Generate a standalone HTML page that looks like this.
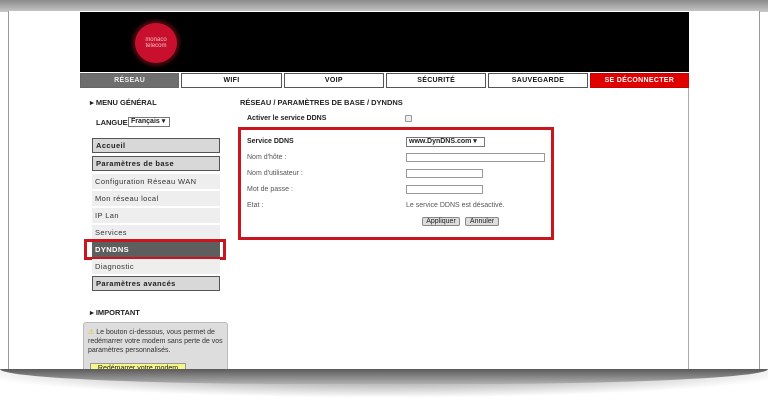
<!DOCTYPE html>
<html><head><meta charset="utf-8"><style>
*{margin:0;padding:0;box-sizing:border-box}
body{width:768px;height:417px;background:#fff;position:relative;overflow:hidden;font-family:"Liberation Sans",Verdana,sans-serif;font-size:8px;color:#222}
.topbar{position:absolute;left:0;top:0;width:768px;height:12px;background:linear-gradient(#8a8a8a,#c8c8c8)}
.page{position:absolute;left:8px;top:11px;width:752px;height:360px;background:#fff;border-left:1px solid #999;border-right:1px solid #999}
.hdr{position:absolute;left:80px;top:12px;width:609px;height:60px;background:#000}
.logo{position:absolute;left:55px;top:11px;width:42px;height:40px;border-radius:50%;background:#c8102e;box-shadow:0 0 3px 3px #4a0a10;color:#f0c0c0;font-size:6px;line-height:6px;text-align:center;padding-top:14px}
.nav{position:absolute;left:80px;top:73px;width:609px;height:15px;display:flex}
.nav div{height:15px;border:1px solid #555;font-weight:bold;font-size:7px;text-align:center;line-height:13px;margin-right:2px;background:#fff;color:#111;letter-spacing:.3px}
.vl{position:absolute;left:688px;top:88px;width:1px;height:283px;background:#aaa}
.m{position:absolute;left:92px;width:128px;height:15px;font-size:7.5px;line-height:15px;padding-left:3px;color:#333;background:#eee;letter-spacing:.4px}
.m.b{background:#d8d8d8;border:1px solid #555;font-weight:bold;line-height:13px;color:#222}
.t{position:absolute;font-size:7.5px}
.in{position:absolute;height:9px;border:1px solid #999;background:#fff}
.bottom{position:absolute;left:0;top:369px;width:768px;height:48px;background:radial-gradient(ellipse 55% 60% at 50% 0%,#777 0%,#aaa 40%,#fff 100%)}
.bar2{position:absolute;left:0;top:369px;width:768px;height:15px;background:linear-gradient(#5a5a5a,#b0b0b0);border-radius:0 0 40% 40%/0 0 100% 100%}
</style></head><body>
<div class="topbar"></div>
<div class="page"></div>
<div class="hdr"><div class="logo">monaco<br>telecom</div></div>
<div class="nav">
<div style="width:100px;background:#6e6e6e;color:#eee;border-color:#666">RÉSEAU</div>
<div style="width:101px">WIFI</div>
<div style="width:101px">VOIP</div>
<div style="width:101px">SÉCURITÉ</div>
<div style="width:100px">SAUVEGARDE</div>
<div style="width:100px;background:#e00000;color:#fff;border-color:#c00;margin:0">SE DÉCONNECTER</div>
</div>
<div class="vl"></div>
<div class="t" style="left:90px;top:98px;font-weight:bold">▸ MENU GÉNÉRAL</div>
<div class="t" style="left:96px;top:118px;font-weight:bold">LANGUE</div>
<div class="in" style="left:128px;top:117px;width:42px;height:10px;font-size:7px;font-weight:bold;line-height:8px;padding-left:2px;border-color:#777">Français ▾</div>
<div class="m b" style="top:138px">Accueil</div>
<div class="m b" style="top:156px">Paramètres de base</div>
<div class="m" style="top:174px">Configuration Réseau WAN</div>
<div class="m" style="top:191px">Mon réseau local</div>
<div class="m" style="top:208px">IP Lan</div>
<div class="m" style="top:225px">Services</div>
<div class="m" style="top:242px;background:#5e5e5e;color:#fff;font-weight:bold"> DYNDNS</div>
<div style="position:absolute;left:84px;top:239px;width:142px;height:21px;border:3px solid #c8151e"></div>
<div class="m" style="top:259px">Diagnostic</div>
<div class="m b" style="top:276px">Paramètres avancés</div>
<div class="t" style="left:90px;top:308px;font-weight:bold">▸ IMPORTANT</div>
<div style="position:absolute;left:83px;top:322px;width:145px;height:60px;background:#ddd;border:1px solid #bbb;border-radius:3px;font-size:7px;line-height:9px;padding:5px 4px;color:#333"><span style="color:#e8b800">⚠</span> Le bouton ci-dessous, vous permet de redémarrer votre modem sans perte de vos paramètres personnalisés.</div>
<div style="position:absolute;left:90px;top:363px;width:96px;height:12px;background:#f6f68a;border:1px solid #999;font-size:7px;text-align:center;line-height:10px">Redémarrer votre modem</div>
<div class="t" style="left:240px;top:98px;font-weight:bold">RÉSEAU / PARAMÈTRES DE BASE / DYNDNS</div>
<div class="t" style="left:247px;top:115px;font-weight:bold;font-size:7px">Activer le service DDNS</div>
<div style="position:absolute;left:405px;top:115px;width:7px;height:7px;border:1px solid #999;background:#eee;border-radius:1px"></div>
<div style="position:absolute;left:238px;top:127px;width:316px;height:113px;border:3px solid #c8151e"></div>
<div class="t" style="left:247px;top:138px;font-weight:bold;font-size:7px">Service DDNS</div>
<div class="in" style="left:406px;top:137px;width:79px;height:10px;font-size:7px;font-weight:bold;line-height:8px;padding-left:2px;border-color:#777">www.DynDNS.com ▾</div>
<div class="t" style="left:247px;top:154px;font-size:7px;color:#555">Nom d'hôte :</div>
<div class="in" style="left:406px;top:153px;width:139px"></div>
<div class="t" style="left:247px;top:170px;font-size:7px;color:#555">Nom d'utilisateur :</div>
<div class="in" style="left:406px;top:169px;width:77px"></div>
<div class="t" style="left:247px;top:186px;font-size:7px;color:#555">Mot de passe :</div>
<div class="in" style="left:406px;top:185px;width:77px"></div>
<div class="t" style="left:247px;top:202px;font-size:7px;color:#555">Etat :</div>
<div class="t" style="left:406px;top:202px;font-size:7px;color:#555">Le service DDNS est désactivé.</div>
<div style="position:absolute;left:422px;top:217px;width:38px;height:9px;background:#ddd;border:1px solid #888;border-radius:2px;font-size:7px;text-align:center;line-height:7px">Appliquer</div>
<div style="position:absolute;left:465px;top:217px;width:34px;height:9px;background:#ddd;border:1px solid #888;border-radius:2px;font-size:7px;text-align:center;line-height:7px">Annuler</div>
<div class="bottom"></div>
<div class="bar2"></div>
</body></html>
